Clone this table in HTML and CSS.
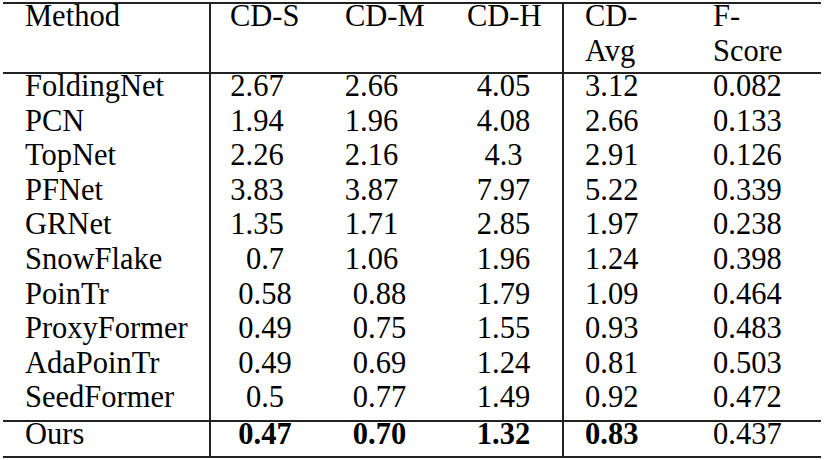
FILE: index.html
```html
<!DOCTYPE html>
<html lang="en">
<head>
    <meta charset="UTF-8">
    <meta name="viewport" content="width=device-width, initial-scale=1.0">
    <title>Point cloud completion results</title>
    <link rel="stylesheet" href="styles.css">
</head>
<body>
    <table class="results">
        <colgroup>
            <col class="w-method">
            <col class="w-cds">
            <col class="w-cdm">
            <col class="w-cdh">
            <col class="w-avg">
            <col class="w-fs">
        </colgroup>
        <thead>
            <tr>
                <th class="name sep"><span class="ln">Method</span></th>
                <th class="cd-s"><span class="ln">CD-S</span></th>
                <th class="cd-m"><span class="ln">CD-M</span></th>
                <th class="cd-h sep"><span class="ln">CD-H</span></th>
                <th class="avg"><span class="ln">CD-</span><span class="ln">Avg</span></th>
                <th class="fs"><span class="ln">F-</span><span class="ln">Score</span></th>
            </tr>
        </thead>
        <tbody>
            <tr>
                <td class="name sep">FoldingNet</td>
                <td class="cd-s">2.67</td>
                <td class="cd-m">2.66</td>
                <td class="cd-h sep">4.05</td>
                <td class="avg">3.12</td>
                <td class="fs">0.082</td>
            </tr>
            <tr>
                <td class="name sep">PCN</td>
                <td class="cd-s">1.94</td>
                <td class="cd-m">1.96</td>
                <td class="cd-h sep">4.08</td>
                <td class="avg">2.66</td>
                <td class="fs">0.133</td>
            </tr>
            <tr>
                <td class="name sep">TopNet</td>
                <td class="cd-s">2.26</td>
                <td class="cd-m">2.16</td>
                <td class="cd-h sep">4.3</td>
                <td class="avg">2.91</td>
                <td class="fs">0.126</td>
            </tr>
            <tr>
                <td class="name sep">PFNet</td>
                <td class="cd-s">3.83</td>
                <td class="cd-m">3.87</td>
                <td class="cd-h sep">7.97</td>
                <td class="avg">5.22</td>
                <td class="fs">0.339</td>
            </tr>
            <tr>
                <td class="name sep">GRNet</td>
                <td class="cd-s">1.35</td>
                <td class="cd-m">1.71</td>
                <td class="cd-h sep">2.85</td>
                <td class="avg">1.97</td>
                <td class="fs">0.238</td>
            </tr>
            <tr>
                <td class="name sep">SnowFlake</td>
                <td class="cd-s low">0.7</td>
                <td class="cd-m">1.06</td>
                <td class="cd-h sep">1.96</td>
                <td class="avg">1.24</td>
                <td class="fs">0.398</td>
            </tr>
            <tr>
                <td class="name sep">PoinTr</td>
                <td class="cd-s low">0.58</td>
                <td class="cd-m low">0.88</td>
                <td class="cd-h sep">1.79</td>
                <td class="avg">1.09</td>
                <td class="fs">0.464</td>
            </tr>
            <tr>
                <td class="name sep">ProxyFormer</td>
                <td class="cd-s low">0.49</td>
                <td class="cd-m low">0.75</td>
                <td class="cd-h sep">1.55</td>
                <td class="avg">0.93</td>
                <td class="fs">0.483</td>
            </tr>
            <tr>
                <td class="name sep">AdaPoinTr</td>
                <td class="cd-s low">0.49</td>
                <td class="cd-m low">0.69</td>
                <td class="cd-h sep">1.24</td>
                <td class="avg">0.81</td>
                <td class="fs">0.503</td>
            </tr>
            <tr>
                <td class="name sep">SeedFormer</td>
                <td class="cd-s low">0.5</td>
                <td class="cd-m low">0.77</td>
                <td class="cd-h sep">1.49</td>
                <td class="avg">0.92</td>
                <td class="fs">0.472</td>
            </tr>
            <tr class="ours">
                <td class="name sep">Ours</td>
                <td class="cd-s low best">0.47</td>
                <td class="cd-m low best">0.70</td>
                <td class="cd-h sep best">1.32</td>
                <td class="avg best">0.83</td>
                <td class="fs">0.437</td>
            </tr>
        </tbody>
    </table>
</body>
</html>
```

FILE: styles.css
```css
body {
    margin: 0;
    background-color: #fff;
    color: #000;
    font-family: "Liberation Serif", "Times New Roman", serif;
}
.results {
    margin: 2px 0 0 3px;
    width: 818px;
    table-layout: fixed;
    border-collapse: separate;
    border-spacing: 0;
    border-top: 2px solid #222;
    border-bottom: 2px solid #222;
    font-size: 30.5px;
    line-height: 25.4px;
}
.w-method { width: 208px; }
.w-cds { width: 115px; }
.w-cdm { width: 121px; }
.w-cdh { width: 117px; }
.w-avg { width: 127px; }
.w-fs { width: 130px; }
th,
td {
    padding: 0;
    vertical-align: top;
    font-weight: normal;
    text-align: left;
    white-space: nowrap;
}
thead th {
    border-bottom: 2px solid #222;
}
.sep {
    border-right: 2px solid #222;
}
.ln {
    display: block;
    padding-bottom: 9.6px;
}
.ln + .ln {
    padding-bottom: 7.6px;
}
.name {
    padding-left: 22px;
}
th.cd-s,
th.cd-m {
    padding-left: 19px;
}
th.cd-h {
    padding-left: 20px;
}
.avg {
    padding-left: 21px;
}
.fs {
    padding-left: 22px;
}
tbody td {
    padding-bottom: 9.2px;
}
td.cd-s {
    text-align: center;
    padding-right: 23px;
}
td.cd-m {
    text-align: center;
    padding-right: 30px;
}
td.cd-h {
    text-align: center;
    padding-right: 2px;
}
td.low {
    padding-left: 16px;
}
tr.ours td {
    border-top: 2px solid #222;
    padding-bottom: 8.6px;
}
.best {
    font-weight: bold;
}
```
